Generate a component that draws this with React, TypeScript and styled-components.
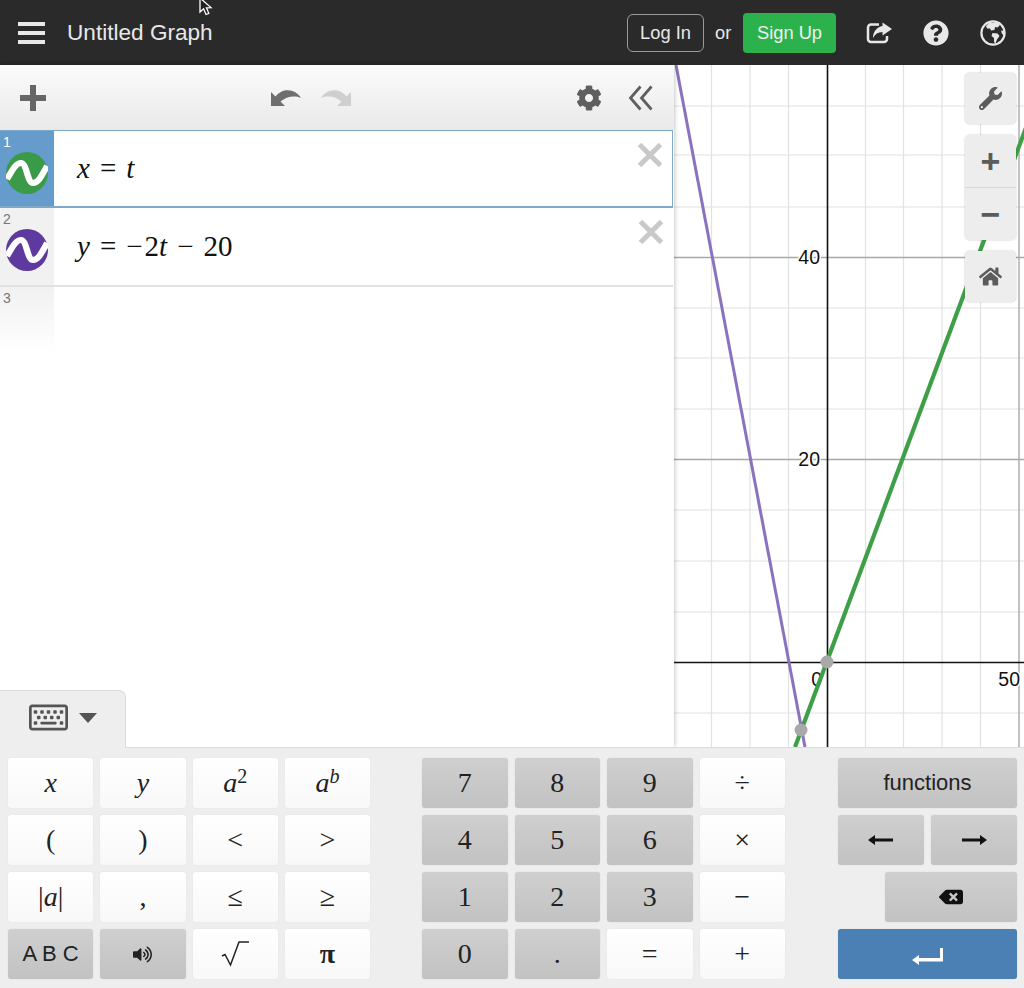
import React from 'react';
import styled, { createGlobalStyle } from 'styled-components';
import {
  FaBackspace,
  FaCog,
  FaHome,
  FaQuestionCircle,
  FaRegKeyboard,
  FaVolumeUp,
  FaWrench,
} from 'react-icons/fa';

const SERIF = '"Liberation Serif", "Times New Roman", serif';
const SANS = '"Liberation Sans", Arial, sans-serif';

const MINOR_X = [711.5, 750, 788.5, 865.5, 903.5, 942, 980.5];
const MINOR_Y = [106, 155, 207, 308, 358, 409, 510, 561, 612, 713];
const MAJOR_Y = [257.5, 459.5];

const CurveIcon = ({ color }: { color: string }) => (
  <CurveSvg viewBox="0 0 42 42">
    <circle cx="21" cy="21" r="21" fill={color} />
    <path
      d="M1 27 C7 17 10 11 15 11 C21 11 21 31 27 31 C32 31 35 25 41 14"
      fill="none"
      stroke="#fff"
      strokeWidth="6.2"
    />
  </CurveSvg>
);

const Cross = () => (
  <CrossSvg viewBox="0 0 26 26">
    <path d="M2.5 2.5 L23.5 23.5 M23.5 2.5 L2.5 23.5" stroke="#c9c9c9" strokeWidth="5" />
  </CrossSvg>
);

const ShareIcon = () => (
  <svg width="26" height="22" viewBox="0 0 26 22">
    <path
      d="M13 2.5 H5 a3 3 0 0 0 -3 3 V17 a3 3 0 0 0 3 3 H18 a3 3 0 0 0 3 -3 V14"
      fill="none"
      stroke="#e8e8e8"
      strokeWidth="2.5"
    />
    <path
      d="M16.5 0.5 L26 7 L16.5 13.5 V10 C12 10 9 12 7 16 C7 10 10.5 5 16.5 4 Z"
      fill="#e8e8e8"
    />
  </svg>
);

const Globe = () => (
  <svg width="26" height="26" viewBox="0 0 26 26">
    <circle cx="13" cy="13" r="11.6" fill="none" stroke="#e8e8e8" strokeWidth="2.2" />
    <path
      d="M9 3 L17 2.5 L20 5 L17.5 7.5 L15 7 L14.5 10 L11 10.5 L10 8.5 L7 8.5 L6 6 Z M12.5 13 L17.5 13.5 L19.5 16 L17 19.5 L15.5 23.5 L14 22 L14 18 L11.5 16 Z M21 10.5 L24 11 L24 15 L22 14 Z"
      fill="#e8e8e8"
    />
  </svg>
);

const Pointer = () => (
  <PointerSvg viewBox="0 0 16 20">
    <path
      d="M1 0 L1 14 L4.6 10.8 L7 16.5 L9.8 15.3 L7.4 9.8 L12 9.6 Z"
      fill="#222"
      stroke="#fff"
      strokeWidth="1.3"
    />
  </PointerSvg>
);

const HistoryArrow = ({ color, flip }: { color: string; flip?: boolean }) => (
  <HistorySvg viewBox="0 0 32 19" $flip={flip}>
    <path
      d="M1 4 L1 18 L15 18 L10.5 13.5 C16 9 24 7 31 10 C26 1 13 -1 5.5 8.5 Z"
      fill={color}
    />
  </HistorySvg>
);

const CollapseIcon = () => (
  <svg width="25" height="26" viewBox="0 0 25 26">
    <path
      d="M12.5 1.5 L2.5 13 L12.5 24.5 M23.5 1.5 L13.5 13 L23.5 24.5"
      fill="none"
      stroke="#5f5f5f"
      strokeWidth="2.8"
    />
  </svg>
);

const Radical = () => (
  <svg width="30" height="28" viewBox="0 0 30 28">
    <path d="M2 16 L5 14.5 L10.5 25 L19 2 L29 2" fill="none" stroke="#222" strokeWidth="1.5" />
  </svg>
);

const ArrowKey = ({ dir }: { dir: 'left' | 'right' }) => (
  <svg width="26" height="12" viewBox="0 0 26 12">
    <path
      d={
        dir === 'left'
          ? 'M0 6 L7 1 L7 4.4 L25 4.4 L25 7.6 L7 7.6 L7 11 Z'
          : 'M26 6 L19 1 L19 4.4 L1 4.4 L1 7.6 L19 7.6 L19 11 Z'
      }
      fill="#111"
    />
  </svg>
);

const EnterGlyph = () => (
  <EnterSvg viewBox="0 0 32 20">
    <path d="M0 14 L7 9 L7 12 L28 12 L28 2 L31 2 L31 15.5 L7 15.5 L7 19 Z" fill="#fff" />
  </EnterSvg>
);

const Graph = () => (
  <GraphPane>
    <GraphSvg viewBox="674 65 350 682">
      {MINOR_X.map((x) => (
        <line key={x} x1={x} x2={x} y1="65" y2="747" stroke="#e2e2e2" strokeWidth="1.2" />
      ))}
      {MINOR_Y.map((y) => (
        <line key={y} x1="674" x2="1024" y1={y} y2={y} stroke="#e2e2e2" strokeWidth="1.2" />
      ))}
      <line x1="1019" x2="1019" y1="65" y2="747" stroke="#a8a8a8" strokeWidth="1.4" />
      {MAJOR_Y.map((y) => (
        <line key={y} x1="674" x2="1024" y1={y} y2={y} stroke="#a8a8a8" strokeWidth="1.4" />
      ))}
      <line x1="827.5" x2="827.5" y1="65" y2="747" stroke="#111" strokeWidth="1.6" />
      <line x1="674" x2="1024" y1="662.5" y2="662.5" stroke="#111" strokeWidth="1.6" />
      <AxisLabel x="820" y="264" textAnchor="end">40</AxisLabel>
      <AxisLabel x="820" y="466" textAnchor="end">20</AxisLabel>
      <AxisLabel x="822" y="686" textAnchor="end">0</AxisLabel>
      <AxisLabel x="1020" y="686" textAnchor="end">50</AxisLabel>
      <line x1="676" y1="65" x2="805" y2="747" stroke="#8a72bf" strokeWidth="3" />
      <line x1="1030" y1="117" x2="795" y2="747" stroke="#3f9f49" strokeWidth="4.2" />
      <circle cx="827" cy="662" r="6.5" fill="#a9a9a9" />
      <circle cx="801" cy="730" r="6.5" fill="#a9a9a9" />
    </GraphSvg>
    <GraphControls>
      <ControlButton $single><FaWrench /></ControlButton>
      <ZoomGroup>
        <ControlButton><BigSign>+</BigSign></ControlButton>
        <ControlButton><BigSign>−</BigSign></ControlButton>
      </ZoomGroup>
      <ControlButton $single><FaHome /></ControlButton>
    </GraphControls>
  </GraphPane>
);

const Keypad = () => (
  <KeypadWrap>
    <KeypadTab>
      <FaRegKeyboard />
      <TabCaret />
    </KeypadTab>
    <KeySection>
      <Key><Var>x</Var></Key>
      <Key><Var>y</Var></Key>
      <Key><Var>a</Var><Sup>2</Sup></Key>
      <Key><Var>a</Var><Sup><Var>b</Var></Sup></Key>
      <Key>(</Key>
      <Key>)</Key>
      <Key>&lt;</Key>
      <Key>&gt;</Key>
      <Key>|<Var>a</Var>|</Key>
      <Key>,</Key>
      <Key>≤</Key>
      <Key>≥</Key>
      <Key $tone="dark" $sans>A B C</Key>
      <Key $tone="dark"><FaVolumeUp size={19} /></Key>
      <Key><Radical /></Key>
      <Key><b>π</b></Key>
    </KeySection>
    <NumberSection>
      <Key $tone="dark">7</Key>
      <Key $tone="dark">8</Key>
      <Key $tone="dark">9</Key>
      <Key>÷</Key>
      <Key $tone="dark">4</Key>
      <Key $tone="dark">5</Key>
      <Key $tone="dark">6</Key>
      <Key>×</Key>
      <Key $tone="dark">1</Key>
      <Key $tone="dark">2</Key>
      <Key $tone="dark">3</Key>
      <Key>−</Key>
      <Key $tone="dark">0</Key>
      <Key $tone="dark">.</Key>
      <Key>=</Key>
      <Key>+</Key>
    </NumberSection>
    <ActionSection>
      <Key $tone="dark" $wide $sans>functions</Key>
      <Key $tone="dark"><ArrowKey dir="left" /></Key>
      <Key $tone="dark"><ArrowKey dir="right" /></Key>
      <BackspaceKey $tone="dark"><FaBackspace size={24} color="#111" /></BackspaceKey>
      <Key $tone="blue" $wide><EnterGlyph /></Key>
    </ActionSection>
  </KeypadWrap>
);

export default function App() {
  return (
    <Page>
      <GlobalStyle />
      <Header>
        <Pointer />
        <Burger>
          <span />
          <span />
          <span />
        </Burger>
        <Title>Untitled Graph</Title>
        <LogIn>Log In</LogIn>
        <OrText>or</OrText>
        <SignUp>Sign Up</SignUp>
        <HeaderIcons>
          <ShareIcon />
          <FaQuestionCircle size={26} />
          <Globe />
        </HeaderIcons>
      </Header>
      <Workspace>
        <Sidebar>
          <Toolbar>
            <PlusGlyph />
            <History>
              <HistoryArrow color="#6e6e6e" />
              <HistoryArrow color="#cfcfcf" flip />
            </History>
            <ToolbarRight>
              <FaCog size={26} color="#5f5f5f" />
              <CollapseIcon />
            </ToolbarRight>
          </Toolbar>
          <Row $active>
            <Gutter $active>
              <RowIndex $active>1</RowIndex>
              <CurveIcon color="#3a9a48" />
            </Gutter>
            <Expression>
              <Var>x</Var><Op>=</Op><Var>t</Var>
            </Expression>
            <DeleteSlot><Cross /></DeleteSlot>
          </Row>
          <Row>
            <Gutter>
              <RowIndex>2</RowIndex>
              <CurveIcon color="#5e3a9e" />
            </Gutter>
            <Expression>
              <Var>y</Var><Op>=</Op><UnaryMinus>−</UnaryMinus>2<Var>t</Var><Op>−</Op>20
            </Expression>
            <DeleteSlot><Cross /></DeleteSlot>
          </Row>
          <EmptyRow>
            <FadeGutter>
              <RowIndex>3</RowIndex>
            </FadeGutter>
          </EmptyRow>
        </Sidebar>
        <Graph />
      </Workspace>
      <Keypad />
    </Page>
  );
}

const GlobalStyle = createGlobalStyle`
  html, body {
    margin: 0;
    padding: 0;
    overflow: hidden;
    background: #fff;
    font-family: ${SANS};
  }
`;

const Page = styled.div`
  display: flex;
  flex-direction: column;
  width: 1024px;
  height: 988px;
  overflow: hidden;
`;

const Header = styled.header`
  position: relative;
  display: flex;
  flex: 0 0 65px;
  align-items: center;
  padding: 0 18px;
  background: #2a2a2a;
  color: #e8e8e8;
`;

const PointerSvg = styled.svg`
  position: absolute;
  top: -2px;
  left: 199px;
  width: 16px;
  height: 20px;
`;

const Burger = styled.div`
  display: flex;
  flex-direction: column;
  justify-content: space-between;
  width: 27px;
  height: 22px;

  span {
    height: 4px;
    background: #e8e8e8;
  }
`;

const Title = styled.div`
  margin-left: 22px;
  margin-right: auto;
  font-size: 22.6px;
`;

const LogIn = styled.div`
  display: flex;
  align-items: center;
  justify-content: center;
  box-sizing: border-box;
  width: 77px;
  height: 38px;
  border: 1px solid #9a9a9a;
  border-radius: 6px;
  font-size: 18.3px;
`;

const OrText = styled.div`
  width: 17px;
  margin: 0 11px;
  font-size: 18.3px;
`;

const SignUp = styled.div`
  display: flex;
  align-items: center;
  justify-content: center;
  width: 93px;
  height: 40px;
  border-radius: 4px;
  background: #2bb24c;
  color: #f2f2f2;
  font-size: 18.3px;
`;

const HeaderIcons = styled.div`
  display: flex;
  align-items: center;
  gap: 31px;
  margin-left: 30px;
`;

const Workspace = styled.main`
  display: flex;
  flex: 1;
  min-height: 0;
`;

const Sidebar = styled.aside`
  position: relative;
  z-index: 1;
  flex: 0 0 674px;
  background: #fff;
  box-shadow: 0 0 5px rgba(0, 0, 0, 0.3);
`;

const Toolbar = styled.div`
  display: flex;
  align-items: center;
  height: 65px;
  padding-left: 20px;
  background: linear-gradient(#fbfbfb, #e9e9e9);
`;

const PlusGlyph = styled.div`
  width: 26px;
  height: 26px;
  background:
    linear-gradient(#666, #666) center / 26px 6px no-repeat,
    linear-gradient(#666, #666) center / 6px 26px no-repeat;
`;

const History = styled.div`
  display: flex;
  gap: 18px;
  margin-left: 224px;
`;

const HistorySvg = styled.svg<{ $flip?: boolean }>`
  width: 32px;
  height: 19px;
  transform: ${(p) => (p.$flip ? 'scaleX(-1)' : 'none')};
`;

const ToolbarRight = styled.div`
  display: flex;
  align-items: center;
  gap: 26px;
  margin-left: 224px;
`;

const Row = styled.div<{ $active?: boolean }>`
  display: flex;
  box-sizing: border-box;
  width: 673px;
  height: ${(p) => (p.$active ? '78px' : '79px')};
  border-bottom: ${(p) => (p.$active ? '2px solid #7fa9c9' : '2px solid #e2e2e2')};
  border-top: ${(p) => (p.$active ? '1px solid #7fa9c9' : '0')};
  border-right: ${(p) => (p.$active ? '1px solid #7fa9c9' : '0')};
`;

const Gutter = styled.div<{ $active?: boolean }>`
  display: flex;
  flex: 0 0 54px;
  flex-direction: column;
  box-sizing: border-box;
  padding: 3px 0 0 6px;
  background: ${(p) => (p.$active ? '#659ccb' : '#f1f1f1')};
`;

const FadeGutter = styled.div`
  flex: 0 0 54px;
  box-sizing: border-box;
  padding: 3px 0 0 6px;
  background: linear-gradient(#f1f1f1, #fff);
`;

const RowIndex = styled.div<{ $active?: boolean }>`
  height: 18px;
  margin-left: -3px;
  color: ${(p) => (p.$active ? '#fff' : '#777')};
  font-size: 14px;
  line-height: 16px;
`;

const CurveSvg = styled.svg`
  flex: none;
  width: 42px;
  height: 42px;
`;

const Expression = styled.div`
  flex: 1;
  align-self: center;
  padding-left: 23px;
  color: #111;
  font-family: ${SERIF};
  font-size: 29px;
  white-space: nowrap;
`;

const Var = styled.i`
  font-family: ${SERIF};
`;

const Op = styled.span`
  margin: 0 10px;
`;

const UnaryMinus = styled.span`
  margin-right: 2px;
`;

const DeleteSlot = styled.div`
  flex: none;
  padding: 11px 9px 0 0;
`;

const CrossSvg = styled.svg`
  display: block;
  width: 26px;
  height: 26px;
`;

const EmptyRow = styled.div`
  display: flex;
  height: 65px;
`;

const GraphPane = styled.section`
  position: relative;
  flex: 1;
  overflow: hidden;
`;

const GraphSvg = styled.svg`
  display: block;
  width: 350px;
  height: 682px;
`;

const AxisLabel = styled.text`
  fill: #111;
  font-family: ${SANS};
  font-size: 19.5px;
  paint-order: stroke;
  stroke: #fff;
  stroke-width: 3px;
`;

const GraphControls = styled.div`
  position: absolute;
  top: 8px;
  right: 8px;
  display: flex;
  flex-direction: column;
  gap: 11px;
`;

const ZoomGroup = styled.div`
  display: flex;
  flex-direction: column;
  overflow: hidden;
  border-radius: 5px;
  box-shadow: 0 0 2px rgba(0, 0, 0, 0.25);

  & > div + div {
    border-top: 1px solid #d8d8d8;
  }
`;

const ControlButton = styled.div<{ $single?: boolean }>`
  display: flex;
  align-items: center;
  justify-content: center;
  width: 51px;
  height: ${(p) => (p.$single ? '51px' : '52px')};
  border-radius: ${(p) => (p.$single ? '5px' : '0')};
  box-shadow: ${(p) => (p.$single ? '0 0 2px rgba(0, 0, 0, 0.25)' : 'none')};
  background: #ededed;
  color: #5c5c5c;
  font-size: 23px;
`;

const BigSign = styled.span`
  font-family: ${SANS};
  font-size: 34px;
  font-weight: bold;
  line-height: 1;
`;

const KeypadWrap = styled.div`
  position: relative;
  z-index: 2;
  display: flex;
  flex: 0 0 241px;
  box-sizing: border-box;
  padding: 10px 7px 0 8px;
  border-top: 1px solid #dcdcdc;
  background: #eeeeee;
`;

const KeypadTab = styled.div`
  position: absolute;
  top: -58px;
  left: 0;
  display: flex;
  align-items: center;
  gap: 11px;
  box-sizing: border-box;
  width: 126px;
  height: 58px;
  padding: 0 0 4px 29px;
  border-top: 1px solid #dcdcdc;
  border-right: 1px solid #dcdcdc;
  border-top-right-radius: 7px;
  background: #eeeeee;
  color: #555;
  font-size: 39px;
`;

const TabCaret = styled.div`
  width: 0;
  height: 0;
  border-top: 10px solid #555;
  border-right: 9px solid transparent;
  border-left: 9px solid transparent;
`;

const KeySection = styled.div`
  display: grid;
  grid-template-columns: repeat(4, 1fr);
  grid-auto-rows: 50px;
  gap: 7px;
  width: 362px;
  height: 221px;
`;

const NumberSection = styled(KeySection)`
  width: 363px;
  margin-left: 52px;
`;

const ActionSection = styled(KeySection)`
  grid-template-columns: repeat(2, 1fr);
  width: 179px;
  margin-left: 53px;
`;

const Key = styled.button<{ $tone?: 'light' | 'dark' | 'blue'; $wide?: boolean; $sans?: boolean }>`
  display: flex;
  align-items: center;
  justify-content: center;
  padding: 0;
  border: 0;
  border-radius: 3px;
  grid-column: ${(p) => (p.$wide ? 'span 2' : 'auto')};
  background: ${(p) =>
    p.$tone === 'dark'
      ? 'linear-gradient(#cfcfcf, #c2c2c2)'
      : p.$tone === 'blue'
        ? '#4a80b4'
        : 'linear-gradient(#fff, #f8f8f8)'};
  box-shadow: ${(p) =>
    p.$tone === 'light' || !p.$tone ? '0 0 1px rgba(0, 0, 0, 0.14)' : '0 0 1px rgba(0, 0, 0, 0.2)'};
  color: #222;
  font-family: ${(p) => (p.$sans ? SANS : SERIF)};
  font-size: ${(p) => (p.$sans ? '22px' : '28px')};
`;

const BackspaceKey = styled(Key)`
  grid-column: span 2;
  justify-self: end;
  width: 132px;
`;

const EnterSvg = styled.svg`
  width: 32px;
  height: 20px;
  margin-top: 3px;
`;

const Sup = styled.sup`
  margin-top: -14px;
  font-size: 20px;
  line-height: 1;
`;
